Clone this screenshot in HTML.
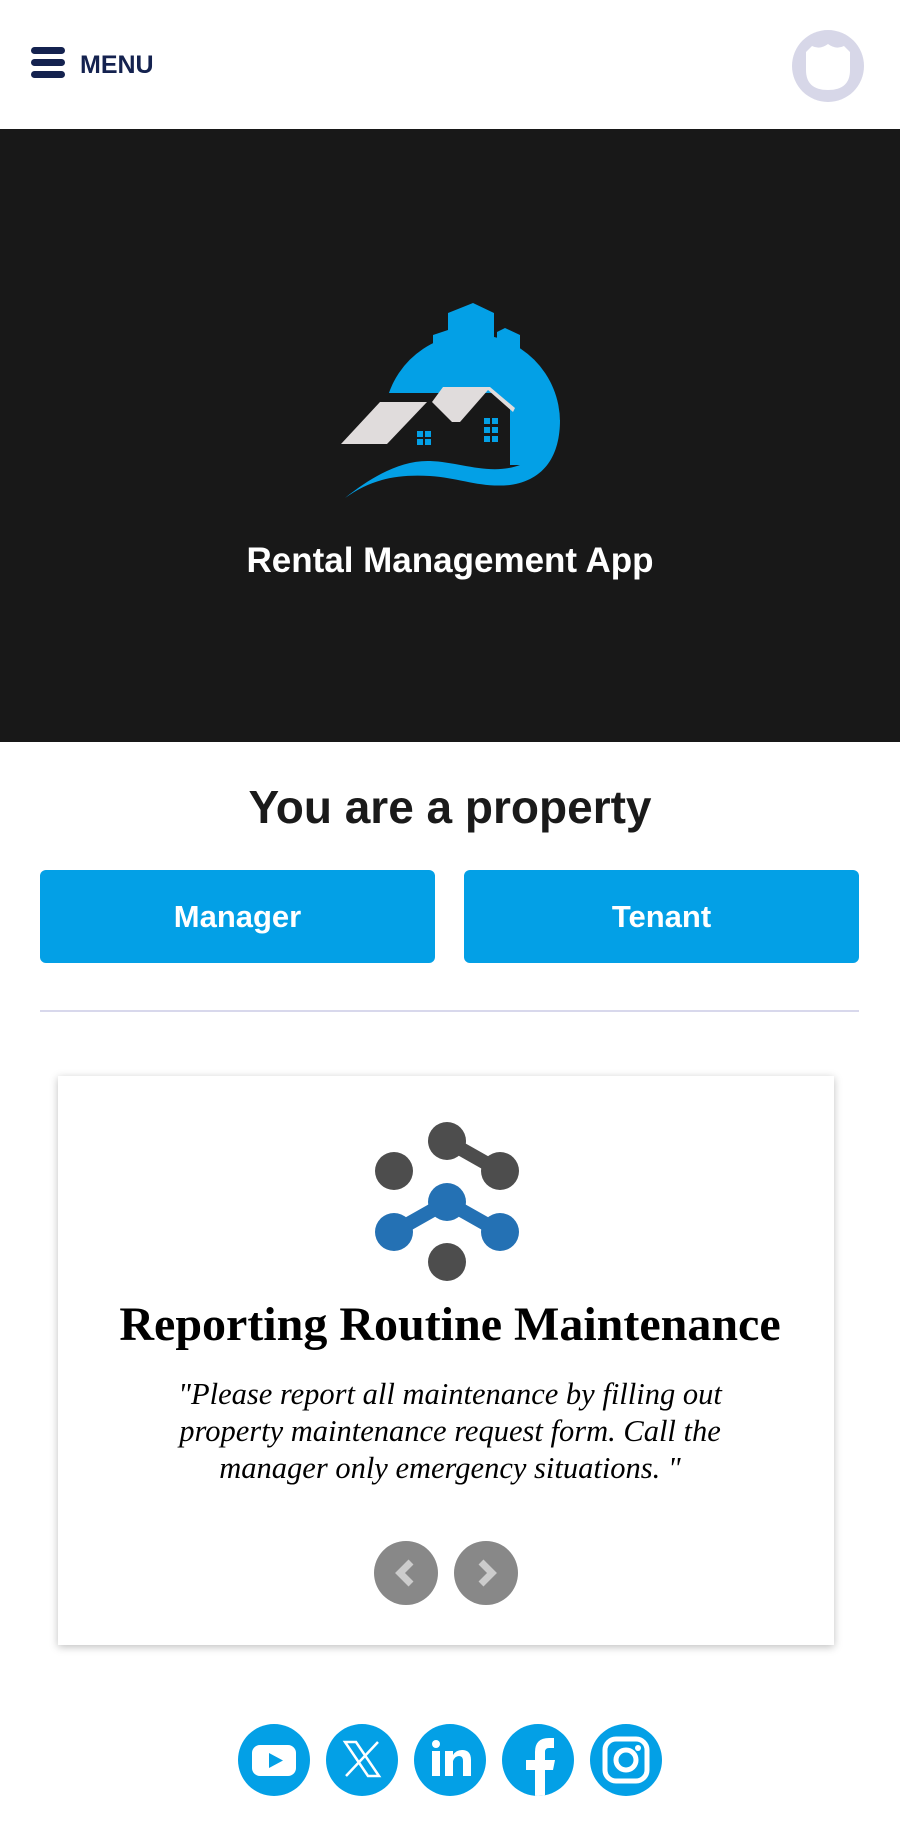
<!DOCTYPE html>
<html><head><meta charset="utf-8"><style>
*{margin:0;padding:0;box-sizing:border-box}
body{width:900px;height:1826px;background:#fff;font-family:"Liberation Sans",sans-serif;position:relative;overflow:hidden}
.abs{position:absolute}
.hdr{left:0;top:0;width:900px;height:129px;background:#fff}
.bar{position:absolute;left:31px;width:34px;height:7px;border-radius:4px;background:#14224f}
.hero{left:0;top:129px;width:900px;height:613px;background:#181818}
.btn{top:870px;height:93px;background:#03a0e6;border-radius:6px;color:#fff;font-weight:bold;font-size:31px;display:flex;align-items:center;justify-content:center}
.card{left:58px;top:1076px;width:776px;height:569px;background:#fff;box-shadow:0 2px 8px rgba(0,0,0,.25)}
.soc{top:1724px;width:72px;height:72px;border-radius:50%;background:#03a0e6}
</style></head><body>
<div class="abs hdr">
 <div class="bar" style="top:47px"></div><div class="bar" style="top:59px"></div><div class="bar" style="top:71px"></div>
 <div class="abs" style="left:80px;top:51px;font-size:25px;font-weight:bold;color:#14224f">MENU</div>
 <svg class="abs" style="left:790px;top:28px" width="76" height="76" viewBox="0 0 76 76"><circle cx="38" cy="38" r="36" fill="#d7d7e8"/><path d="M16 24 L22 18 Q30 22 38 16 Q46 22 54 18 L60 24 L60 42 Q60 62 38 62 Q16 62 16 42 Z" fill="#fff"/></svg>
</div>
<div class="abs hero">
 <svg class="abs" style="left:320px;top:151px" width="260" height="230" viewBox="0 0 260 230">
  <circle cx="152" cy="142" r="88" fill="#03a0e6"/>
  <path d="M0,240 L0,113 L197,113 L197,185 L240,140 L260,140 L260,240 Z" fill="#181818"/>
  <polygon points="113,55 128,50 128,33 153,23 174,33 174,107 120,113 113,113" fill="#03a0e6"/>
  <polygon points="177,52 185,48 200,55 200,185 190,185 190,125 177,115" fill="#03a0e6"/>
  <path d="M25,218 C50,198 80,180 110,181 C140,182 170,196 200,185 L200,140 L240,140 C240,175 225,200 190,205 C160,208 140,198 110,196 C75,194 50,200 25,218 Z" fill="#03a0e6"/>
  <polygon points="21,164 60,122 107,122 67,164" fill="#e0dcdc"/>
  <polygon points="112,122 123,107 170,107 195,128 193,132 168,110 140,142 132,142" fill="#e0dcdc"/>
  <g fill="#03a0e6"><rect x="97" y="151" width="6" height="6"/><rect x="105" y="151" width="6" height="6"/><rect x="97" y="159" width="6" height="6"/><rect x="105" y="159" width="6" height="6"/>
  <rect x="164" y="138" width="6" height="6"/><rect x="172" y="138" width="6" height="6"/><rect x="164" y="147" width="6" height="6"/><rect x="172" y="147" width="6" height="6"/><rect x="164" y="156" width="6" height="6"/><rect x="172" y="156" width="6" height="6"/></g>
 </svg>
 <div class="abs" style="left:0;width:900px;top:412px;text-align:center;color:#fff;font-weight:bold;font-size:35px">Rental Management App</div>
</div>
<div class="abs" style="left:0;width:900px;top:780px;text-align:center;color:#1a1a1a;font-weight:bold;font-size:46px">You are a property</div>
<div class="abs btn" style="left:40px;width:395px">Manager</div>
<div class="abs btn" style="left:464px;width:395px">Tenant</div>
<div class="abs" style="left:40px;top:1010px;width:819px;height:2px;background:#d8d8ec"></div>
<div class="abs card"></div>
<svg class="abs" style="left:360px;top:1110px" width="180" height="180" viewBox="360 1110 180 180">
 <line x1="447" y1="1141" x2="500" y2="1171" stroke="#4d4d4d" stroke-width="14"/>
 <circle cx="447" cy="1141" r="19" fill="#4d4d4d"/><circle cx="394" cy="1171" r="19" fill="#4d4d4d"/><circle cx="500" cy="1171" r="19" fill="#4d4d4d"/>
 <polyline points="394,1232 447,1202 500,1232" fill="none" stroke="#2471b4" stroke-width="14"/>
 <circle cx="447" cy="1202" r="19" fill="#2471b4"/><circle cx="394" cy="1232" r="19" fill="#2471b4"/><circle cx="500" cy="1232" r="19" fill="#2471b4"/>
 <circle cx="447" cy="1262" r="19" fill="#4d4d4d"/>
</svg>
<div class="abs" style="left:0;width:900px;top:1297px;text-align:center;font-family:'Liberation Serif',serif;font-weight:bold;font-size:48px;color:#000">Reporting Routine Maintenance</div>
<div class="abs" style="left:140px;width:620px;top:1376px;text-align:center;font-family:'Liberation Serif',serif;font-style:italic;font-size:30.5px;line-height:37px;color:#000">"Please report all maintenance by filling out property maintenance request form. Call the manager only emergency situations. "</div>
<svg class="abs" style="left:370px;top:1540px" width="150" height="66" viewBox="370 1540 150 66">
 <circle cx="406" cy="1573" r="32" fill="#888"/><circle cx="486" cy="1573" r="32" fill="#888"/>
 <polyline points="411,1562 400,1573 411,1584" fill="none" stroke="#ccc" stroke-width="7"/>
 <polyline points="481,1562 492,1573 481,1584" fill="none" stroke="#ccc" stroke-width="7"/>
</svg>
<div class="abs soc" style="left:238px"><svg width="72" height="72" viewBox="0 0 72 72"><rect x="14" y="21" width="44" height="31" rx="8" fill="#fff"/><polygon points="31,29 45,36.5 31,44" fill="#03a0e6"/></svg></div>
<div class="abs soc" style="left:326px"><svg width="72" height="72" viewBox="0 0 72 72"><path d="M19 18 H30 L53 52 H42 Z" fill="none" stroke="#fff" stroke-width="2.5"/><line x1="52" y1="18" x2="20" y2="52" stroke="#fff" stroke-width="2.5"/></svg></div>
<div class="abs soc" style="left:414px"><svg width="72" height="72" viewBox="0 0 72 72"><circle cx="22" cy="20" r="4" fill="#fff"/><rect x="18" y="27" width="8" height="25" fill="#fff"/><path d="M31 27h8v4q3-5 9-5q9 0 9 10v16h-8v-15q0-5-4-5t-6 5v15h-8z" fill="#fff"/></svg></div>
<div class="abs soc" style="left:502px;overflow:hidden"><svg width="72" height="72" viewBox="0 0 72 72"><path d="M33 72V46h-9v-10h9v-8q0-14 14-14h5v10h-5q-4 0-4 4v8h10l-2 10h-8v26z" fill="#fff"/></svg></div>
<div class="abs soc" style="left:590px"><svg width="72" height="72" viewBox="0 0 72 72"><rect x="15" y="15" width="42" height="42" rx="11" fill="none" stroke="#fff" stroke-width="5"/><circle cx="36" cy="36" r="10" fill="none" stroke="#fff" stroke-width="5"/><circle cx="48" cy="24" r="3" fill="#fff"/></svg></div>
</body></html>
